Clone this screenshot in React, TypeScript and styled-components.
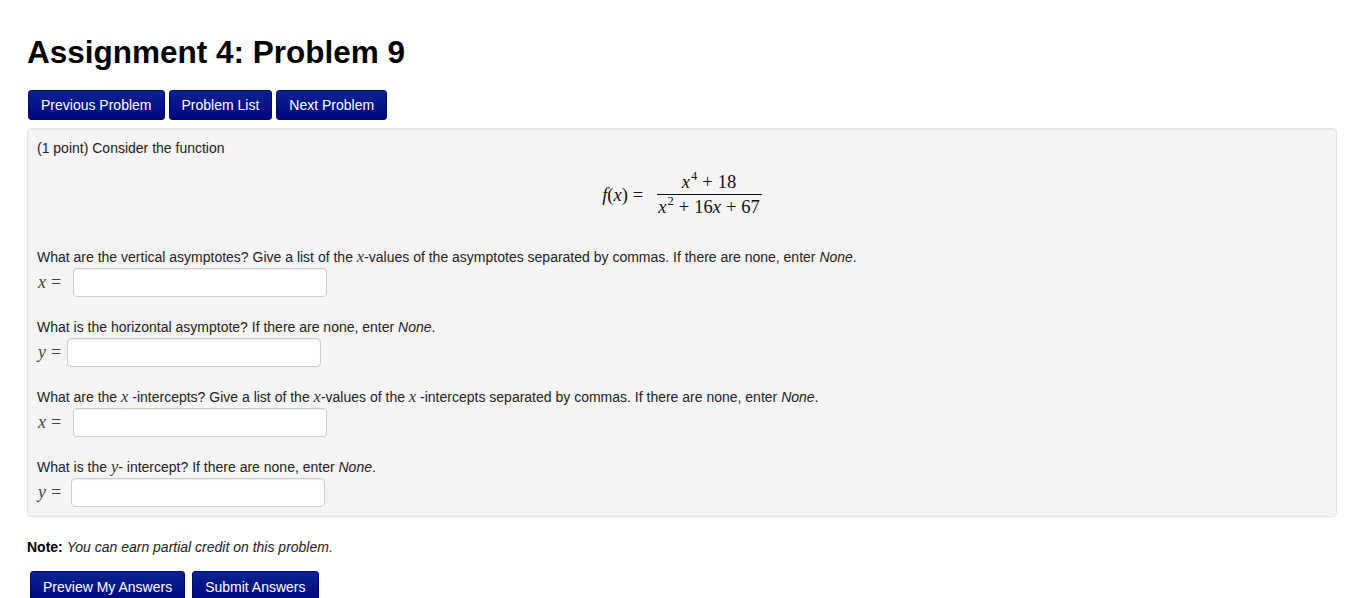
import * as React from 'react';
import styled, { createGlobalStyle } from 'styled-components';

const GlobalStyle = createGlobalStyle`
	body {
		margin: 0;
		background: #ffffff;
		font-family: "Liberation Sans", Arial, sans-serif;
		font-size: 14px;
		line-height: 20px;
		color: #222222;
	}
`;

const Page = styled.div`
	padding: 22px 17px 0 27px;
`;

const Title = styled.h2`
	margin: 10px 0 18px;
	font-size: 31.5px;
	line-height: 40px;
	font-weight: bold;
	color: #000000;
`;

const NavBar = styled.div`
	display: flex;
	gap: 4px;
	margin-left: 1px;
	margin-bottom: 8px;
`;

const NavButton = styled.button<{ $wide?: boolean }>`
	font-family: "Liberation Sans", Arial, sans-serif;
	font-size: 14px;
	line-height: 20px;
	color: #ffffff;
	padding: ${(p) => (p.$wide ? '5px 12px' : '4px 12px')};
	border: 1px solid #000a6e;
	border-radius: 3px;
	background: linear-gradient(to bottom, #0a2391, #00047f);
	cursor: pointer;
`;

const Well = styled.div`
	background: #f4f4f4;
	border: 1px solid #e3e3e3;
	border-radius: 4px;
	box-shadow: inset 0 1px 1px rgba(0, 0, 0, 0.05);
	padding: 9px 9px 9px;
`;

const Line = styled.div`
	margin: 0;
`;

const Display = styled.div`
	display: flex;
	justify-content: center;
	align-items: center;
	margin: 14px 0 29px;
	padding-left: 0;
	font-family: "Liberation Serif", "Times New Roman", serif;
	font-size: 18.5px;
	color: #111111;
`;

const Frac = styled.span`
	display: inline-flex;
	flex-direction: column;
	align-items: center;
	margin-left: 8px;
`;

const Numer = styled.span`
	padding: 0 4px 1px;
	border-bottom: 1.3px solid #111111;
	line-height: 21px;
	min-width: 97px;
	text-align: center;
`;

const Denom = styled.span`
	padding: 2px 2px 0;
	line-height: 21px;
`;

const M = styled.i`
	font-family: "Liberation Serif", "Times New Roman", serif;
	font-size: 16.5px;
	color: #333333;
`;

const Up = styled.sup`
	font-size: 12.5px;
	vertical-align: 8px;
	line-height: 0;
	margin-left: 1px;
`;

const Op = styled.span`
	margin: 0 5px;
`;

const Question = styled.div`
	margin-bottom: 20px;

	&:last-child {
		margin-bottom: 0;
	}
`;

const AnswerRow = styled.div<{ $gap: number }>`
	display: flex;
	align-items: center;
	gap: ${(p) => p.$gap}px;
	height: 30px;
`;

const Label = styled.span`
	font-family: "Liberation Serif", "Times New Roman", serif;
	font-size: 18px;
	color: #444444;
	padding-left: 1px;

	i {
		margin-right: 5px;
	}
`;

const AnswerInput = styled.input`
	width: 254px;
	height: 29px;
	box-sizing: border-box;
	border: 1px solid #cccccc;
	border-radius: 4px;
	background: #ffffff;
	box-shadow: inset 0 1px 1px rgba(0, 0, 0, 0.075);
	font-size: 14px;
	padding: 4px 6px;
`;

const Note = styled.p`
	margin: 20px 0 14px;

	b {
		color: #000000;
	}
`;

const SubmitBar = styled.div`
	display: flex;
	gap: 7px;
	margin-left: 3px;
`;

const questions = [
	{
		text: (
			<>
				What are the vertical asymptotes? Give a list of the <M>x</M>-values of the asymptotes separated by commas. If there are none,
				enter <i>None</i>.
			</>
		),
		v: 'x',
		gap: 12
	},
	{
		text: (
			<>
				What is the horizontal asymptote? If there are none, enter <i>None</i>.
			</>
		),
		v: 'y',
		gap: 6
	},
	{
		text: (
			<>
				What are the <M>x</M> -intercepts? Give a list of the <M>x</M>-values of the <M>x</M> -intercepts separated by commas. If
				there are none, enter <i>None</i>.
			</>
		),
		v: 'x',
		gap: 12
	},
	{
		text: (
			<>
				What is the <M>y</M>- intercept? If there are none, enter <i>None</i>.
			</>
		),
		v: 'y',
		gap: 10
	}
];

const App = () => {
	return (
		<Page>
			<GlobalStyle />
			<Title>Assignment 4: Problem 9</Title>
			<NavBar>
				<NavButton>Previous Problem</NavButton>
				<NavButton>Problem List</NavButton>
				<NavButton>Next Problem</NavButton>
			</NavBar>
			<Well>
				<Line>(1 point) Consider the function</Line>
				<Display>
					<span>
						<i>f</i>(<i>x</i>)
					</span>
					<Op>=</Op>
					<Frac>
						<Numer>
							<i>x</i>
							<Up>4</Up>
							<Op>+</Op>18
						</Numer>
						<Denom>
							<i>x</i>
							<Up>2</Up>
							<Op>+</Op>16<i>x</i>
							<Op>+</Op>67
						</Denom>
					</Frac>
				</Display>
				{questions.map((q, i) => (
					<Question key={i}>
						<Line>{q.text}</Line>
						<AnswerRow $gap={q.gap}>
							<Label>
								<i>{q.v}</i>=
							</Label>
							<AnswerInput type="text" />
						</AnswerRow>
					</Question>
				))}
			</Well>
			<Note>
				<b>Note:</b> <i>You can earn partial credit on this problem.</i>
			</Note>
			<SubmitBar>
				<NavButton $wide>Preview My Answers</NavButton>
				<NavButton $wide>Submit Answers</NavButton>
			</SubmitBar>
		</Page>
	);
};

export default App;
